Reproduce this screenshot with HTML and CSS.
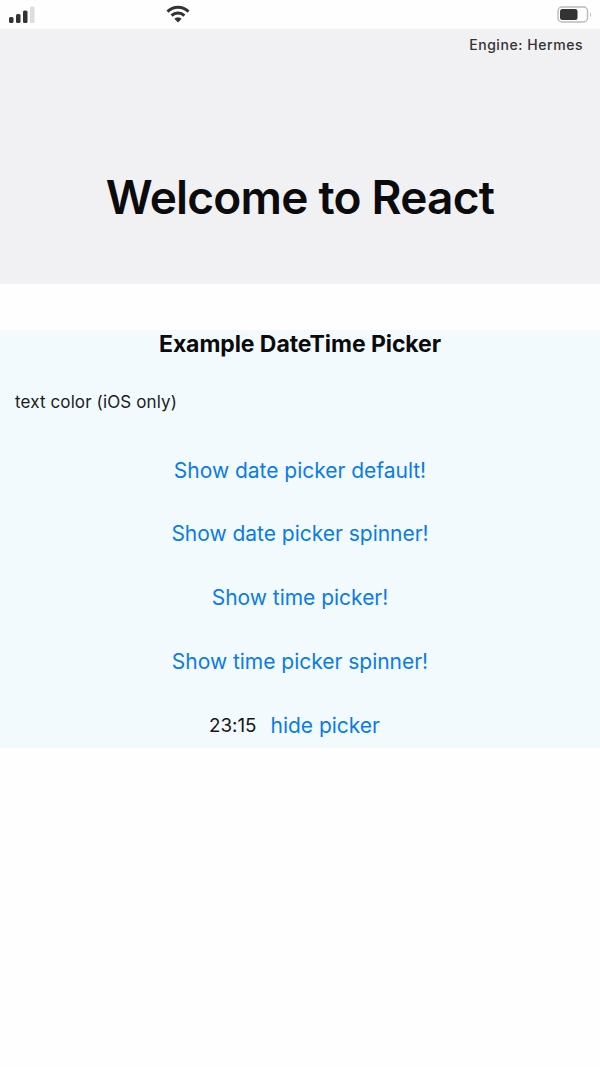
FILE: index.html
```html
<!DOCTYPE html>
<html lang="en">
<head>
<meta charset="utf-8">
<title>Example DateTime Picker</title>
<link rel="stylesheet" href="styles.css">
</head>
<body>
<div class="status-bar">
  <svg class="signal" width="26" height="18" viewBox="0 0 26 18">
    <rect x="0" y="11" width="4.5" height="6" rx="1.5" fill="#333"/>
    <rect x="7" y="8" width="4.5" height="9" rx="1.5" fill="#333"/>
    <rect x="14" y="4.5" width="4.5" height="12.5" rx="1.5" fill="#333"/>
    <rect x="21" y="0.5" width="4.5" height="16.5" rx="1.5" fill="#ddd"/>
  </svg>
  <svg class="wifi" width="24" height="18" viewBox="0 0 24 18">
    <path d="M1.5 6.6 A15 15 0 0 1 22.5 6.6" fill="none" stroke="#333" stroke-width="3"/>
    <path d="M5.6 10.6 A9.2 9.2 0 0 1 18.4 10.6" fill="none" stroke="#333" stroke-width="3"/>
    <path d="M8.3 13.8 A5.2 5.2 0 0 1 15.7 13.8 L12 17.6 Z" fill="#333"/>
  </svg>
  <svg class="battery" width="36" height="18" viewBox="0 0 36 18">
    <rect x="1" y="1" width="29.5" height="15" rx="4" fill="none" stroke="#bbb" stroke-width="1.4"/>
    <rect x="3" y="3" width="17.5" height="11" rx="2.5" fill="#333"/>
    <path d="M33 6.5 a3 3 0 0 1 0 4.5 z" fill="#bbb"/>
  </svg>
</div>
<header class="hero">
  <div class="engine">Engine: Hermes</div>
  <h1 class="hero-title">Welcome to React</h1>
</header>
<main class="panel">
  <h2 class="panel-title">Example DateTime Picker</h2>
  <div class="color-label">text color (iOS only)</div>
  <div class="actions">
    <div class="action"><span class="link">Show date picker default!</span></div>
    <div class="action"><span class="link">Show date picker spinner!</span></div>
    <div class="action"><span class="link">Show time picker!</span></div>
    <div class="action"><span class="link">Show time picker spinner!</span></div>
    <div class="action action-last"><span class="time">23:15</span><span class="link">hide picker</span></div>
  </div>
</main>
</body>
</html>
```
FILE: styles.css
```css
* { box-sizing: border-box; }
html, body { margin: 0; padding: 0; }
body {
  width: 600px;
  height: 1067px;
  overflow: hidden;
  background: #fefdff;
  font-family: Inter, "Liberation Sans", sans-serif;
  color: #0b0b0d;
}
.status-bar {
  height: 29px;
  display: flex;
  align-items: flex-start;
  padding-top: 5px;
  background: #fefdff;
}
.signal { margin-left: 9px; margin-top: 1px; }
.wifi { margin-left: 131px; margin-top: 0; }
.battery { margin-left: auto; margin-right: 7px; margin-top: 1px; }
.hero {
  height: 255px;
  background: #f1f0f2;
  padding-top: 8px;
  display: flex;
  flex-direction: column;
}
.engine {
  align-self: flex-end;
  margin-right: 17px;
  font-size: 14px;
  line-height: 16px;
  letter-spacing: 0.55px;
  font-weight: 500;
  color: #333335;
}
.hero-title {
  margin: 116px 0 0;
  text-align: center;
  font-size: 46px;
  line-height: 56px;
  font-weight: 600;
  letter-spacing: -0.78px;
}
.panel {
  margin-top: 46px;
  height: 418px;
  background: #f3fafd;
}
.panel-title {
  margin: 0;
  text-align: center;
  font-size: 23px;
  line-height: 28px;
  font-weight: 700;
  letter-spacing: -0.08px;
}
.color-label {
  margin-top: 32px;
  padding-left: 15px;
  font-size: 17px;
  line-height: 24px;
  letter-spacing: 0.12px;
  color: #1a1a1c;
}
.actions {
  margin-top: 42px;
  display: flex;
  flex-direction: column;
  gap: 35.75px;
}
.action {
  height: 28px;
  display: flex;
  justify-content: center;
  align-items: center;
  gap: 14px;
  font-size: 21px;
  letter-spacing: -0.02px;
}
.link { color: #0a7bea; }
.time { font-size: 18.8px; color: #161618; }
.action-last { padding-right: 11px; }
```
